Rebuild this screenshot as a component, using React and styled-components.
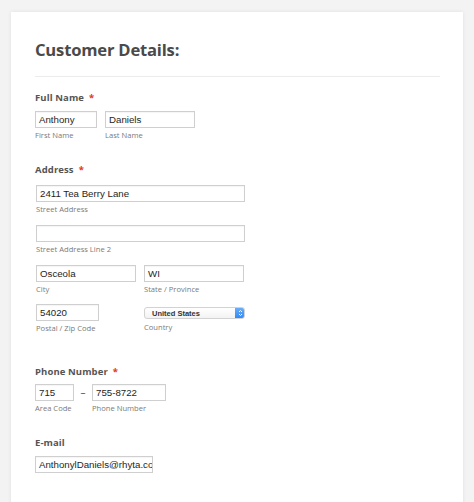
import * as React from 'react';
import styled, { createGlobalStyle } from 'styled-components';

const GlobalStyle = createGlobalStyle`
  html, body {
    margin: 0;
    padding: 0;
    background: #f3f3f3;
  }
  * { box-sizing: border-box; }
`;

//outer gray page
const Page = styled.div`
  padding: 12px 11px 0 11px;
  font-family: 'Open Sans', sans-serif;
`;

//white form card
const Card = styled.div`
  background: #ffffff;
  box-shadow: 0 0 4px rgba(0, 0, 0, 0.08);
  padding: 26px 23px 40px 24px;
`;

const Title = styled.h1`
  margin: 0;
  font-family: 'Open Sans', sans-serif;
  font-size: 16.6px;
  font-weight: 700;
  color: #4a4a4a;
  line-height: 24px;
  letter-spacing: -0.2px;
`;

const Divider = styled.hr`
  border: none;
  border-top: 1px solid #ececec;
  margin: 14px 0 14px 0;
`;

const Section = styled.div`
  margin-bottom: ${(p) => p.$gap || 21}px;
`;

const Label = styled.div`
  font-size: 9.5px;
  font-weight: 700;
  color: #555;
  line-height: 14px;
  margin-bottom: ${(p) => p.$gap || 6}px;
  letter-spacing: 0.1px;
`;

const Star = styled.span`
  color: #e3342f;
  margin-left: 5px;
`;

const Row = styled.div`
  display: flex;
  align-items: flex-start;
  gap: ${(p) => p.$gap || 8}px;
  margin-bottom: ${(p) => p.$mb || 0}px;
  padding-left: ${(p) => p.$indent || 0}px;
`;

const Field = styled.div`
  display: flex;
  flex-direction: column;
  width: ${(p) => p.$w}px;
`;

const Input = styled.div`
  height: 17px;
  border: 1px solid #cfcfcf;
  box-shadow: inset 0 1px 1px rgba(0, 0, 0, 0.04);
  background: #fff;
  padding: 0 3px;
  font-family: 'Liberation Sans', Arial, sans-serif;
  font-size: 9.7px;
  line-height: 15px;
  color: #1e1e1e;
  white-space: nowrap;
  overflow: hidden;
`;

const SubLabel = styled.div`
  font-size: 7.6px;
  color: #7a7a7a;
  line-height: 14px;
  margin-top: ${(p) => p.$mt || 0}px;
`;

const Dash = styled.div`
  font-size: 10px;
  color: #555;
  line-height: 17px;
  width: 10px;
  text-align: center;
`;

const Select = styled.div`
  margin-top: 3px;
  height: 12px;
  border: 1px solid #d2d2d2;
  border-radius: 3px;
  background: linear-gradient(#ffffff, #f3f3f3);
  display: flex;
  align-items: center;
  justify-content: space-between;
  padding-left: 7px;
  font-family: 'Liberation Sans', Arial, sans-serif;
  font-size: 7.5px;
  font-weight: 700;
  color: #333;
  overflow: hidden;
`;

const Stepper = styled.div`
  width: 10px;
  height: 12px;
  margin-right: -1px;
  border-radius: 0 3px 3px 0;
  background: linear-gradient(#6cb1fb, #2f86f6);
  display: flex;
  align-items: center;
  justify-content: center;
`;

function StepperIcon() {
  return (
    <svg width="5" height="8" viewBox="0 0 5 8">
      <path d="M1 3 L2.5 1.5 L4 3" stroke="#fff" strokeWidth="0.9" fill="none" />
      <path d="M1 5 L2.5 6.5 L4 5" stroke="#fff" strokeWidth="0.9" fill="none" />
    </svg>
  );
}

export default function App() {
  return (
    <>
      <GlobalStyle />
      <Page>
        <Card>
          <Title>Customer Details:</Title>
          <Divider />

          <Section>
            <Label>Full Name<Star>*</Star></Label>
            <Row>
              <Field $w={62}>
                <Input>Anthony</Input>
                <SubLabel>First Name</SubLabel>
              </Field>
              <Field $w={90}>
                <Input>Daniels</Input>
                <SubLabel>Last Name</SubLabel>
              </Field>
            </Row>
          </Section>

          <Section $gap={30}>
            <Label $gap={8}>Address<Star>*</Star></Label>
            <Row $mb={9} $indent={1}>
              <Field $w={209}>
                <Input>2411 Tea Berry Lane</Input>
                <SubLabel>Street Address</SubLabel>
              </Field>
            </Row>
            <Row $mb={9} $indent={1}>
              <Field $w={209}>
                <Input />
                <SubLabel>Street Address Line 2</SubLabel>
              </Field>
            </Row>
            <Row $mb={8} $indent={1}>
              <Field $w={100}>
                <Input>Osceola</Input>
                <SubLabel>City</SubLabel>
              </Field>
              <Field $w={100}>
                <Input>WI</Input>
                <SubLabel>State / Province</SubLabel>
              </Field>
            </Row>
            <Row $gap={45} $indent={1}>
              <Field $w={63}>
                <Input>54020</Input>
                <SubLabel>Postal / Zip Code</SubLabel>
              </Field>
              <Field $w={101}>
                <Select>
                  United States
                  <Stepper><StepperIcon /></Stepper>
                </Select>
                <SubLabel $mt={1}>Country</SubLabel>
              </Field>
            </Row>
          </Section>

          <Section>
            <Label $gap={5}>Phone Number<Star>*</Star></Label>
            <Row $gap={4}>
              <Field $w={39}>
                <Input>715</Input>
                <SubLabel>Area Code</SubLabel>
              </Field>
              <Dash>–</Dash>
              <Field $w={74}>
                <Input>755-8722</Input>
                <SubLabel>Phone Number</SubLabel>
              </Field>
            </Row>
          </Section>

          <Section>
            <Label $gap={6}>E-mail</Label>
            <Row>
              <Field $w={118}>
                <Input>AnthonylDaniels@rhyta.com</Input>
              </Field>
            </Row>
          </Section>
        </Card>
      </Page>
    </>
  );
}
